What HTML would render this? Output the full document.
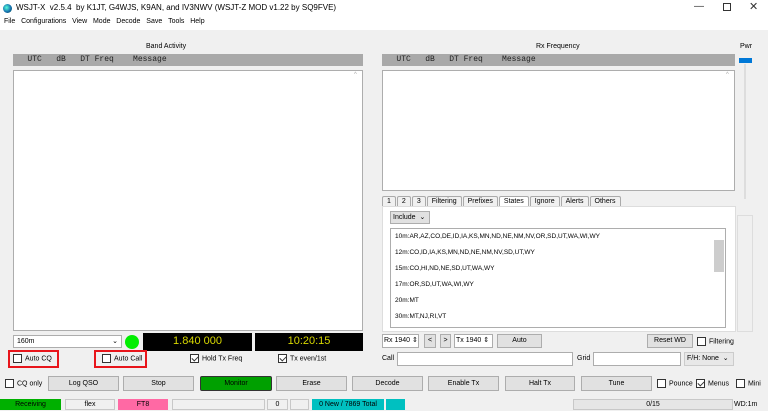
<!DOCTYPE html><html><head><style>
*{margin:0;padding:0;box-sizing:border-box}
body{width:768px;height:411px;background:#f0f0f0;font-family:"Liberation Sans",sans-serif;font-size:7px;color:#000;position:relative;overflow:hidden}
.a{position:absolute}
.hdr{background:#a9a9a9;font-family:"Liberation Mono",monospace;font-size:8px;color:#222;white-space:pre;line-height:12px}
.box{background:#fff;border:1px solid #adadad}
.btn{position:absolute;background:#e1e1e1;border:1px solid #adadad;text-align:center;line-height:13px;font-size:7px}
.cb{display:inline-block;width:9px;height:9px;border:1px solid #333;background:#fff;vertical-align:middle;margin-right:3px;position:relative}
.ck::after{content:"";position:absolute;left:2px;top:0px;width:3px;height:5px;border:solid #333;border-width:0 1px 1px 0;transform:rotate(45deg)}
.st{position:absolute;top:399px;height:11px;border:1px solid #c8c8c8;text-align:center;line-height:9px;font-size:7px}
.lcd{position:absolute;background:#000;color:#d8d800;font-size:11px;text-align:center;line-height:17px;font-family:"Liberation Sans",sans-serif}
.tab{display:inline-block;border:1px solid #aaa;border-bottom:none;padding:0 4px;margin-right:1px;height:10px;line-height:9px;border-radius:2px 2px 0 0}
</style></head><body>
<div class="a" style="left:0;top:0;width:768px;height:30px;background:#fff"></div>
<div class="a" style="left:3px;top:4px;width:9px;height:9px;border-radius:50%;background:radial-gradient(circle at 40% 40%,#5fd,#16a 60%,#062)"></div>
<div class="a" style="left:16px;top:3px;font-size:8px">WSJT-X &nbsp;v2.5.4 &nbsp;by K1JT, G4WJS, K9AN, and IV3NWV (WSJT-Z MOD v1.22 by SQ9FVE)</div>
<div class="a" style="left:694px;top:1px;font-size:10px;color:#333">—</div>
<div class="a" style="left:723px;top:3px;width:8px;height:8px;border:1px solid #333"></div>
<div class="a" style="left:749px;top:0px;font-size:11px;color:#333">✕</div>
<div class="a" style="left:4px;top:18px;font-size:7px">File &nbsp;&nbsp;Configurations &nbsp;&nbsp;View &nbsp;&nbsp;Mode &nbsp;&nbsp;Decode &nbsp;&nbsp;Save &nbsp;&nbsp;Tools &nbsp;&nbsp;Help</div>

<div class="a" style="left:146px;top:43px">Band Activity</div>
<div class="a hdr" style="left:13px;top:54px;width:350px;height:12px">   UTC   dB   DT Freq    Message</div>
<div class="a box" style="left:13px;top:70px;width:350px;height:261px"></div>
<div class="a" style="left:354px;top:72px;font-size:6px;color:#aaa">^</div>

<div class="a" style="left:536px;top:43px">Rx Frequency</div>
<div class="a hdr" style="left:382px;top:54px;width:353px;height:12px">   UTC   dB   DT Freq    Message</div>
<div class="a box" style="left:382px;top:70px;width:353px;height:121px"></div>
<div class="a" style="left:726px;top:72px;font-size:6px;color:#aaa">^</div>

<div class="a" style="left:740px;top:43px;font-size:7px">Pwr</div>
<div class="a" style="left:739px;top:58px;width:13px;height:5px;background:#0078d7"></div>
<div class="a" style="left:744px;top:64px;width:2px;height:135px;background:#ddd"></div>
<div class="a" style="left:737px;top:215px;width:16px;height:117px;border:1px solid #ddd;background:#f0f0f0"></div>

<div class="a" style="left:382px;top:196px;font-size:7px;white-space:nowrap">
<span class="tab">1</span><span class="tab">2</span><span class="tab">3</span><span class="tab">Filtering</span><span class="tab">Prefixes</span><span class="tab" style="background:#fff">States</span><span class="tab">Ignore</span><span class="tab">Alerts</span><span class="tab">Others</span></div>
<div class="a" style="left:382px;top:206px;width:354px;height:126px;background:#fff;border:1px solid #ddd"></div>
<div class="a" style="left:390px;top:211px;width:40px;height:13px;background:#e1e1e1;border:1px solid #adadad;line-height:11px;padding-left:2px">Include &nbsp;⌄</div>
<div class="a box" style="left:390px;top:228px;width:336px;height:100px;font-size:6.5px;line-height:16px;padding:0 4px">10m:AR,AZ,CO,DE,ID,IA,KS,MN,ND,NE,NM,NV,OR,SD,UT,WA,WI,WY<br>12m:CO,ID,IA,KS,MN,ND,NE,NM,NV,SD,UT,WY<br>15m:CO,HI,ND,NE,SD,UT,WA,WY<br>17m:OR,SD,UT,WA,WI,WY<br>20m:MT<br>30m:MT,NJ,RI,VT</div>
<div class="a" style="left:714px;top:240px;width:10px;height:32px;background:#cdcdcd"></div>

<div class="a" style="left:13px;top:335px;width:109px;height:13px;background:#fff;border:1px solid #adadad;padding-left:3px;line-height:11px">160m<span style="position:absolute;right:3px">⌄</span></div>
<div class="a" style="left:125px;top:335px;width:14px;height:14px;border-radius:50%;background:#00ee00"></div>
<div class="lcd" style="left:143px;top:333px;width:109px;height:18px">1.840 000</div>
<div class="lcd" style="left:255px;top:333px;width:108px;height:18px">10:20:15</div>

<div class="a" style="left:8px;top:350px;width:51px;height:18px;border:2px solid #e8151b"></div>
<div class="a" style="left:94px;top:350px;width:53px;height:18px;border:2px solid #e8151b"></div>
<div class="a" style="left:13px;top:354px"><span class="cb"></span>Auto CQ</div>
<div class="a" style="left:102px;top:354px"><span class="cb"></span>Auto Call</div>
<div class="a" style="left:190px;top:354px"><span class="cb ck"></span>Hold Tx Freq</div>
<div class="a" style="left:278px;top:354px"><span class="cb ck"></span>Tx even/1st</div>

<div class="a" style="left:382px;top:334px;width:37px;height:14px;background:#fff;border:1px solid #adadad;line-height:12px;padding-left:1px">Rx 1940 ⇕</div>
<div class="btn" style="left:424px;top:334px;width:12px;height:14px;line-height:12px">&lt;</div>
<div class="btn" style="left:440px;top:334px;width:11px;height:14px;line-height:12px">&gt;</div>
<div class="a" style="left:454px;top:334px;width:39px;height:14px;background:#fff;border:1px solid #adadad;line-height:12px;padding-left:1px">Tx 1940 ⇕</div>
<div class="btn" style="left:497px;top:334px;width:45px;height:14px;line-height:12px">Auto</div>
<div class="btn" style="left:647px;top:334px;width:46px;height:14px;line-height:12px">Reset WD</div>
<div class="a" style="left:697px;top:337px"><span class="cb"></span>Filtering</div>
<div class="a" style="left:382px;top:355px">Call</div>
<div class="a box" style="left:397px;top:352px;width:176px;height:14px"></div>
<div class="a" style="left:577px;top:355px">Grid</div>
<div class="a box" style="left:593px;top:352px;width:88px;height:14px"></div>
<div class="a" style="left:684px;top:352px;width:50px;height:14px;background:#e8e8e8;border:1px solid #ccc;line-height:12px;padding-left:2px">F/H: None &nbsp;⌄</div>

<div class="a" style="left:5px;top:379px"><span class="cb"></span>CQ only</div>
<div class="btn" style="left:48px;top:376px;width:71px;height:15px">Log QSO</div>
<div class="btn" style="left:123px;top:376px;width:71px;height:15px">Stop</div>
<div class="btn" style="left:200px;top:376px;width:72px;height:15px;background:#00a000;border-color:#333;border-radius:2px">Monitor</div>
<div class="btn" style="left:276px;top:376px;width:71px;height:15px">Erase</div>
<div class="btn" style="left:352px;top:376px;width:71px;height:15px">Decode</div>
<div class="btn" style="left:428px;top:376px;width:71px;height:15px">Enable Tx</div>
<div class="btn" style="left:505px;top:376px;width:70px;height:15px">Halt Tx</div>
<div class="btn" style="left:581px;top:376px;width:71px;height:15px">Tune</div>
<div class="a" style="left:657px;top:379px"><span class="cb"></span>Pounce</div>
<div class="a" style="left:696px;top:379px"><span class="cb ck"></span>Menus</div>
<div class="a" style="left:736px;top:379px"><span class="cb"></span>Mini</div>

<div class="st" style="left:0;width:61px;background:#00b000;border-color:#00b000">Receiving</div>
<div class="st" style="left:65px;width:50px">flex</div>
<div class="st" style="left:118px;width:50px;background:#ff69a4;border-color:#ff69a4">FT8</div>
<div class="st" style="left:172px;width:93px"></div>
<div class="st" style="left:267px;width:21px">0</div>
<div class="st" style="left:290px;width:19px"></div>
<div class="st" style="left:312px;width:72px;background:#00c0c0;border-color:#00c0c0">0 New / 7869 Total</div>
<div class="st" style="left:386px;width:19px;background:#00c0c0;border-color:#00c0c0"></div>
<div class="st" style="left:573px;width:160px;background:#e6e6e6">0/15</div>
<div class="a" style="left:734px;top:401px">WD:1m</div>
</body></html>
